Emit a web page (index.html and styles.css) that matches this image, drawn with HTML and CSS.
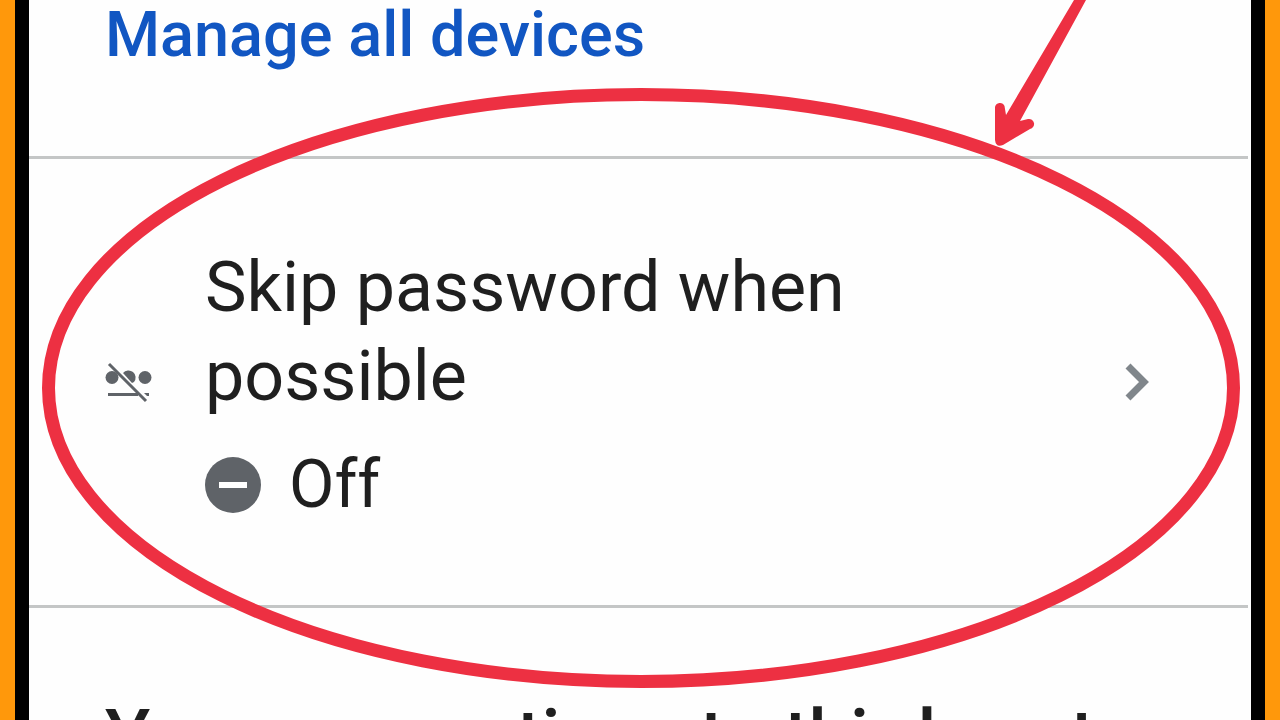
FILE: index.html
```html
<!DOCTYPE html>
<html lang="en">
<head>
  <meta charset="UTF-8" />
  <meta name="viewport" content="width=device-width, initial-scale=1.0"/>
  <title>Security settings</title>
  <link rel="stylesheet" href="styles.css">
</head>
<body>

  <main class="screen">
    <section class="devices">
      <a class="manage-link" href="#devices">Manage all devices</a>
    </section>

    <a class="setting-row" href="#skip-password">
      <svg class="setting-icon" viewBox="0 0 48 42" aria-hidden="true">
        <circle cx="7" cy="16.500" r="6.500"/>
        <path d="M18 12a6.500 6.500 0 0 1 11 9l-2 1z"/>
        <circle cx="40" cy="16.500" r="6.500"/>
        <path class="line" d="M3 33.500H33M4 3L41 40"/>
        <path d="M39 32h5v3h-2z"/>
      </svg>
      <span class="setting-text">
        <span class="setting-title">Skip password when possible</span>
        <span class="status">
          <svg class="status-icon" viewBox="0 0 56 56" aria-hidden="true">
            <circle cx="28" cy="28" r="28"/>
            <rect x="14" y="25" width="28" height="6"/>
          </svg>
          Off
        </span>
      </span>
      <svg class="chevron" viewBox="0 0 24 38" aria-hidden="true">
        <path d="M3 3L19 19L3 35"/>
      </svg>
    </a>

    <section class="connections">
      <h2>Your connections to third-party apps &amp; services</h2>
    </section>
  </main>

  <!-- Highlight ring and arrow -->
  <svg class="highlight" viewBox="0 0 1280 720" preserveAspectRatio="none" aria-hidden="true">
    <ellipse cx="641" cy="388" rx="592.500" ry="293.500"/>
    <path d="M1074 0L1006 115L1004.500 106A5 5 0 0 0 995 107V140Q996 148 1003 145L1030 129A5 5 0 0 0 1028 119L1020 121L1086 0Z"/>
  </svg>

</body>
</html>
```

FILE: styles.css
```css
* {
  box-sizing: border-box;
}
body {
  margin: 0;
  padding: 0 15px;
  height: 100vh;
  overflow: hidden;
  background-color: #ff980b;
  color: #1f1f1f;
  font-family: Roboto, Arial, sans-serif;
}
a {
  color: inherit;
  text-decoration: none;
}
.screen {
  height: 100%;
  overflow: hidden;
  padding-right: 3px;
  border: solid #000;
  border-width: 0 14px;
  background-color: #fefefe;
}
.devices {
  padding: 0 76px 86px;
}
.manage-link {
  display: block;
  color: #1156c2;
  font-size: 63px;
  font-weight: 500;
  line-height: 70px;
}
.setting-row {
  display: flex;
  align-items: center;
  height: 452px;
  padding: 0 99px 0 76px;
  border: solid #c4c6c6;
  border-width: 3px 0;
}
.setting-icon {
  flex: none;
  width: 48px;
  height: 42px;
  margin-right: 52px;
  fill: #5f6368;
}
.setting-icon .line {
  fill: none;
  stroke: #5f6368;
  stroke-width: 3;
}
.setting-text {
  flex: 1;
  padding-top: 8px;
}
.setting-title {
  display: block;
  max-width: 700px;
  font-size: 70px;
  line-height: 89px;
}
.status {
  display: flex;
  align-items: center;
  gap: 28px;
  margin-top: 20px;
  font-size: 66px;
  line-height: 88px;
}
.status-icon {
  width: 56px;
  height: 56px;
  fill: #5f6368;
}
.status-icon rect {
  fill: #fff;
}
.chevron {
  flex: none;
  width: 24px;
  height: 38px;
  fill: none;
  stroke: #80868b;
  stroke-width: 7;
}
.connections {
  padding: 85px 20px 0 76px;
}
h2 {
  margin: 0;
  font-size: 74px;
  font-weight: 500;
  line-height: 88px;
}
.highlight {
  position: absolute;
  top: 0;
  left: 0;
  width: 100%;
  height: 100%;
  pointer-events: none;
  fill: #ed3042;
}
.highlight ellipse {
  fill: none;
  stroke: #ed3042;
  stroke-width: 13;
}
```
